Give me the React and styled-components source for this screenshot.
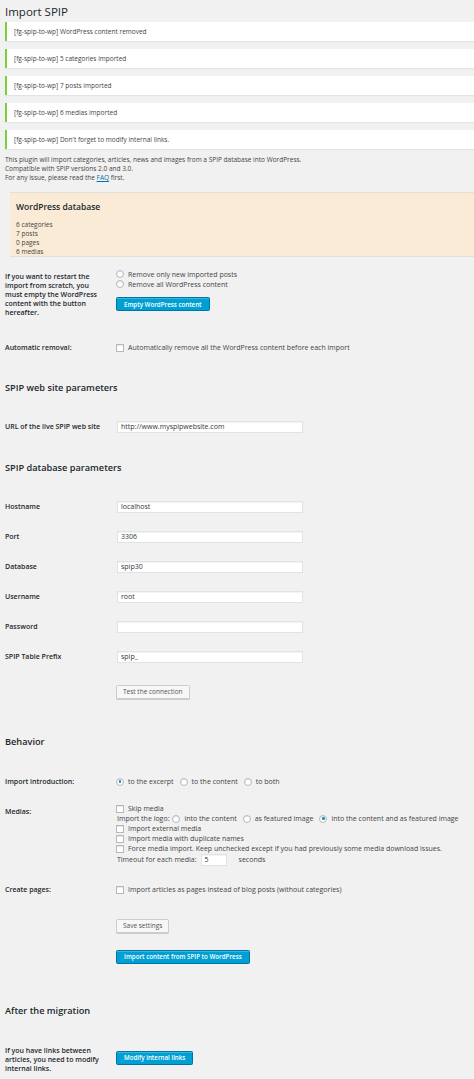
import React from "react";
import styled, { createGlobalStyle } from "styled-components";

const GlobalStyle = createGlobalStyle`
  html, body {
    margin: 0;
    padding: 0;
    background: #f1f1f1;
  }
  body {
    font-family: "Open Sans", "Liberation Sans", sans-serif;
    font-size: 6.5px;
    line-height: 9px;
    color: #444;
    min-height: 1079px;
  }
`;

const Wrap = styled.div`
  padding: 0 0 8px 5px;
  display: flex;
  flex-direction: column;
`;

const Title = styled.h1`
  margin: 4px 0 0;
  font-size: 11.5px;
  line-height: 16px;
  font-weight: 400;
  color: #23282d;
`;

const NoticeList = styled.div`
  display: flex;
  flex-direction: column;
  gap: 8px;
  margin-top: 2px;
`;

const Notice = styled.div`
  height: 19px;
  display: flex;
  align-items: center;
  background: #fff;
  border-left: 2px solid #7ad03a;
  padding-left: 7px;
  box-shadow: 0 1px 1px rgba(0, 0, 0, 0.05);
`;

const Intro = styled.p`
  margin: 6px 0 0;
`;

const Link = styled.a`
  color: #0073aa;
  text-decoration: underline;
`;

const DbBox = styled.div`
  margin: 10px 0 0 5px;
  padding: 8px 6px 2px;
  height: 65px;
  box-sizing: border-box;
  background: #faebd7;
  border-top: 1px solid #e6dfd4;
  border-bottom: 1px solid #e6dfd4;
`;

const BoxTitle = styled.h3`
  margin: 0 0 7px;
  font-size: 8.5px;
  line-height: 12px;
  font-weight: 600;
  color: #23282d;
`;

const Section = styled.h2`
  margin: ${(p) => p.$top}px 0 0;
  font-size: 9.2px;
  line-height: 12px;
  font-weight: 600;
  color: #23282d;
`;

const Row = styled.div`
  display: grid;
  grid-template-columns: 111px 1fr;
  margin-top: ${(p) => p.$top}px;
  font-size: 7px;
`;

const Label = styled.div`
  font-weight: 600;
  color: #23282d;
  padding-top: ${(p) => p.$pad || 0}px;
  padding-right: 12px;
  align-self: ${(p) => (p.$center ? "center" : "start")};
`;

const Field = styled.div`
  display: flex;
  flex-direction: column;
  align-items: flex-start;
`;

const Line = styled.div`
  display: flex;
  align-items: center;
  height: 10px;
  white-space: nowrap;
`;

const Option = styled.span`
  display: inline-flex;
  align-items: center;
  gap: 4px;
  margin-right: ${(p) => p.$gap || 0}px;
  margin-left: ${(p) => p.$ml || 0}px;
`;

const Radio = styled.span`
  width: 8px;
  height: 8px;
  border-radius: 50%;
  box-sizing: border-box;
  border: 1px solid #b4b9be;
  background: #fff;
  box-shadow: inset 0 1px 1px rgba(0, 0, 0, 0.1);
  display: inline-flex;
  align-items: center;
  justify-content: center;
  flex: none;
  &::after {
    content: "";
    width: 2.5px;
    height: 2.5px;
    border-radius: 50%;
    background: ${(p) => (p.$on ? "#1e8cbe" : "transparent")};
  }
`;

const Check = styled.span`
  width: 8px;
  height: 8px;
  box-sizing: border-box;
  border: 1px solid #b4b9be;
  background: #fff;
  box-shadow: inset 0 1px 1px rgba(0, 0, 0, 0.1);
  flex: none;
`;

const Input = styled.div`
  width: ${(p) => p.$w || 186}px;
  height: 12px;
  box-sizing: border-box;
  margin-left: ${(p) => p.$ml || 1}px;
  padding-left: 3px;
  display: flex;
  align-items: center;
  background: #fff;
  border: 1px solid #e2e2e2;
  box-shadow: inset 0 1px 1px rgba(0, 0, 0, 0.05);
  color: #32373c;
`;

const Button = styled.div`
  height: 14px;
  box-sizing: border-box;
  margin-top: ${(p) => p.$top || 0}px;
  padding: 0 ${(p) => (p.$primary ? 7 : 6)}px;
  display: inline-flex;
  align-items: center;
  border-radius: 1.5px;
  white-space: nowrap;
  font-size: ${(p) => (p.$primary ? 6.2 : 6.5)}px;
  font-weight: ${(p) => (p.$primary ? 600 : 400)};
  color: ${(p) => (p.$primary ? "#fff" : "#555")};
  background: ${(p) => (p.$primary ? "#00a0d2" : "#f7f7f7")};
  border: 1px solid ${(p) => (p.$primary ? "#0073aa" : "#cccccc")};
  box-shadow: ${(p) =>
    p.$primary ? "inset 0 1px 0 rgba(120,200,230,.5)" : "0 1px 0 #ccc"};
`;

const Spacer = styled.div`
  height: ${(p) => p.$h}px;
`;

const notices = [
  "WordPress content removed",
  "5 categories imported",
  "7 posts imported",
  "6 medias imported",
  "Don't forget to modify internal links.",
];

const dbFields = [
  ["Hostname", "localhost", 27],
  ["Port", "3306", 18],
  ["Database", "spip30", 18],
  ["Username", "root", 18],
  ["Password", "", 18],
  ["SPIP Table Prefix", "spip_", 18],
];

export default function App() {
  return (
    <>
      <GlobalStyle />
      <Wrap>
        <Title>Import SPIP</Title>
        <NoticeList>
          {notices.map((n) => (
            <Notice key={n}>[fg-spip-to-wp] {n}</Notice>
          ))}
        </NoticeList>

        <Intro>
          This plugin will import categories, articles, news and images from a SPIP
          database into WordPress.
          <br />
          Compatible with SPIP versions 2.0 and 3.0.
          <br />
          For any issue, please read the <Link>FAQ</Link> first.
        </Intro>

        <DbBox>
          <BoxTitle>WordPress database</BoxTitle>
          6 categories
          <br />7 posts
          <br />0 pages
          <br />6 medias
        </DbBox>

        <Row $top={12}>
          <Label $pad={2.5}>
            If you want to restart the import from scratch, you must empty the
            WordPress content with the button hereafter.
          </Label>
          <Field>
            <Line>
              <Option>
                <Radio />
                Remove only new imported posts
              </Option>
            </Line>
            <Line>
              <Option>
                <Radio />
                Remove all WordPress content
              </Option>
            </Line>
            <Button $primary $top={8}>
              Empty WordPress content
            </Button>
          </Field>
        </Row>

        <Row $top={26}>
          <Label $center>Automatic removal:</Label>
          <Field>
            <Line>
              <Option>
                <Check />
                Automatically remove all the WordPress content before each import
              </Option>
            </Line>
          </Field>
        </Row>

        <Section $top={29}>SPIP web site parameters</Section>
        <Row $top={27}>
          <Label $center>URL of the live SPIP web site</Label>
          <Field>
            <Input>http://www.myspipwebsite.com</Input>
          </Field>
        </Row>

        <Section $top={29}>SPIP database parameters</Section>
        {dbFields.map(([label, value, top]) => (
          <Row key={label} $top={top}>
            <Label $center>{label}</Label>
            <Field>
              <Input>{value}</Input>
            </Field>
          </Row>
        ))}
        <Row $top={22}>
          <span />
          <Field>
            <Button>Test the connection</Button>
          </Field>
        </Row>

        <Section $top={37}>Behavior</Section>
        <Row $top={29}>
          <Label $center>Import introduction:</Label>
          <Field>
            <Line>
              <Option $gap={6}>
                <Radio $on />
                to the excerpt
              </Option>
              <Option $gap={6}>
                <Radio />
                to the content
              </Option>
              <Option>
                <Radio />
                to both
              </Option>
            </Line>
          </Field>
        </Row>

        <Row $top={17}>
          <Label $pad={3.5}>Medias:</Label>
          <Field>
            <Line>
              <Option>
                <Check />
                Skip media
              </Option>
            </Line>
            <Line>
              <Option $gap={3} $ml={1}>
                Import the logo:
              </Option>
              <Option $gap={6}>
                <Radio />
                into the content
              </Option>
              <Option $gap={6}>
                <Radio />
                as featured image
              </Option>
              <Option>
                <Radio $on />
                into the content and as featured image
              </Option>
            </Line>
            <Line>
              <Option>
                <Check />
                Import external media
              </Option>
            </Line>
            <Line>
              <Option>
                <Check />
                Import media with duplicate names
              </Option>
            </Line>
            <Line>
              <Option>
                <Check />
                Force media import. Keep unchecked except if you had previously some
                media download issues.
              </Option>
            </Line>
            <Spacer $h={1} />
            <Line>
              <Option $ml={1}>Timeout for each media:</Option>
              <Input $w={26} $ml={4}>
                5
              </Input>
              <Option $ml={12}>seconds</Option>
            </Line>
          </Field>
        </Row>

        <Row $top={20}>
          <Label $center>Create pages:</Label>
          <Field>
            <Line>
              <Option>
                <Check />
                Import articles as pages instead of blog posts (without categories)
              </Option>
            </Line>
          </Field>
        </Row>

        <Row $top={24}>
          <span />
          <Field>
            <Button>Save settings</Button>
            <Button $primary $top={17}>
              Import content from SPIP to WordPress
            </Button>
          </Field>
        </Row>

        <Section $top={41}>After the migration</Section>
        <Row $top={29}>
          <Label>
            If you have links between articles, you need to modify internal links.
          </Label>
          <Field>
            <Button $primary $top={5}>
              Modify internal links
            </Button>
          </Field>
        </Row>
      </Wrap>
    </>
  );
}
